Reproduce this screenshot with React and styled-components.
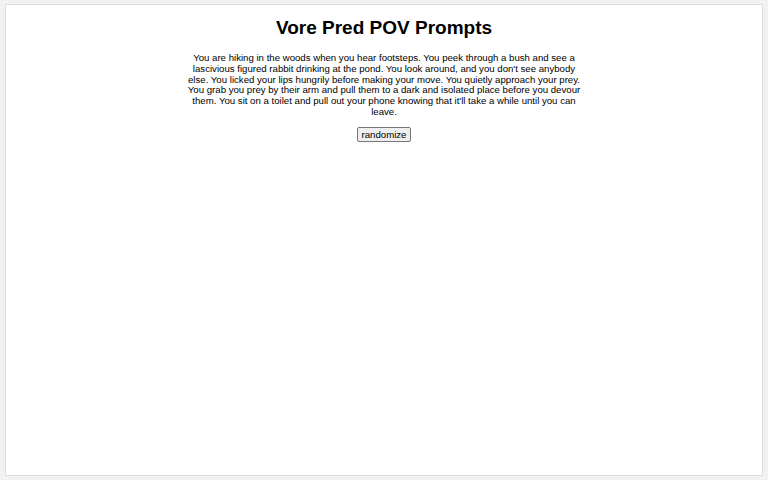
import React, { useState } from 'react';
import styled, { createGlobalStyle } from 'styled-components';

const GlobalStyle = createGlobalStyle`
  html, body {
    margin: 0;
    height: 100%;
    background: #f2f2f2;
  }
  #root {
    height: 100%;
  }
`;

const Frame = styled.div`
  box-sizing: border-box;
  margin: 4px 5px;
  height: 472px;
  background: #fff;
  border: 1px solid #dcdcdc;
  font-family: "Liberation Sans", Arial, sans-serif;
  color: #000;
  text-align: center;
`;

const Title = styled.h1`
  margin: 10px 0 0;
  font-size: 19px;
  line-height: 26px;
  font-weight: bold;
`;

const Prompt = styled.p`
  width: 400px;
  margin: 12px auto 0;
  font-size: 9.65px;
  line-height: 10.8px;
`;

const Button = styled.button`
  margin-top: 9px;
  font-family: "Liberation Sans", Arial, sans-serif;
  font-size: 9.65px;
  padding: 1px 4px;
  background: #efefef;
  border: 1px solid #767676;
  border-radius: 2px;
`;

const prompts = [
  "You are hiking in the woods when you hear footsteps. You peek through a bush and see a lascivious figured rabbit drinking at the pond. You look around, and you don't see anybody else. You licked your lips hungrily before making your move. You quietly approach your prey. You grab you prey by their arm and pull them to a dark and isolated place before you devour them. You sit on a toilet and pull out your phone knowing that it'll take a while until you can leave.",
];

const App = () => {
  const [index, setIndex] = useState(0);

  return (
    <>
      <GlobalStyle />
      <Frame>
        <Title>Vore Pred POV Prompts</Title>
        <Prompt>{prompts[index]}</Prompt>
        <Button onClick={() => setIndex((index + 1) % prompts.length)}>randomize</Button>
      </Frame>
    </>
  );
};

export default App;
